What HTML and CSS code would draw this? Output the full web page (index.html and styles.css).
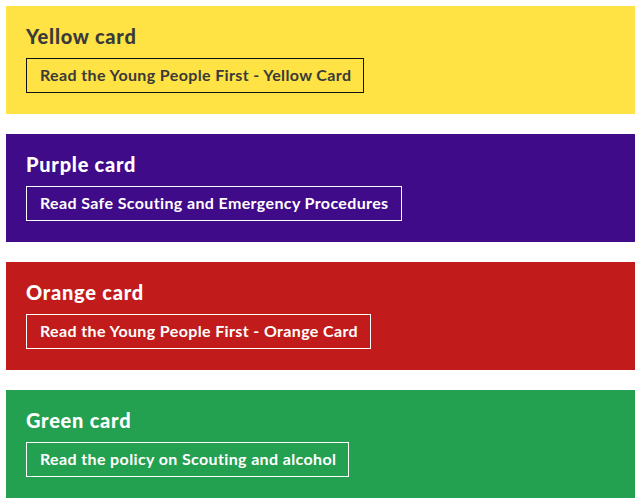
FILE: index.html
```html
<!DOCTYPE html>
<html lang="en">
<head>
<meta charset="utf-8">
<title>Cards</title>
<link rel="stylesheet" href="styles.css">
</head>
<body>
<main class="cards">
  <section class="card card-yellow">
    <h2 class="card-title">Yellow card</h2>
    <a class="card-link" href="#">Read the Young People First - Yellow Card</a>
  </section>
  <section class="card card-purple">
    <h2 class="card-title">Purple card</h2>
    <a class="card-link" href="#">Read Safe Scouting and Emergency Procedures</a>
  </section>
  <section class="card card-red">
    <h2 class="card-title">Orange card</h2>
    <a class="card-link" href="#">Read the Young People First - Orange Card</a>
  </section>
  <section class="card card-green">
    <h2 class="card-title">Green card</h2>
    <a class="card-link" href="#">Read the policy on Scouting and alcohol</a>
  </section>
</main>
</body>
</html>
```

FILE: styles.css
```css
* { box-sizing: border-box; }

html, body {
  margin: 0;
  padding: 0;
  background: #ffffff;
}

body {
  padding: 6px 7px 6px 6px;
  font-family: "Lato", "Noto Sans", "Liberation Sans", sans-serif;
}

.cards {
  display: flex;
  flex-direction: column;
  gap: 20px;
}

.card {
  display: flex;
  flex-direction: column;
  align-items: flex-start;
  padding: 18px 20px 21px 20px;
  color: #ffffff;
}

.card-title {
  margin: 0 0 10px 0;
  font-size: 20px;
  line-height: 24px;
  font-weight: 900;
  letter-spacing: 0.75px;
}

.card-link {
  display: inline-block;
  padding: 7px 12px 9px 13px;
  border: 1px solid #ffffff;
  font-size: 16px;
  line-height: 17px;
  font-weight: 700;
  letter-spacing: 0.37px;
  color: #ffffff;
  text-decoration: none;
}

.card-yellow { background: #ffe243; color: #3a3a3a; }
.card-yellow .card-link { color: #3a3a3a; border-color: #111111; }

.card-purple { background: #3f0b89; }
.card-red { background: #c11c1b; }
.card-green { background: #23a050; }
```
